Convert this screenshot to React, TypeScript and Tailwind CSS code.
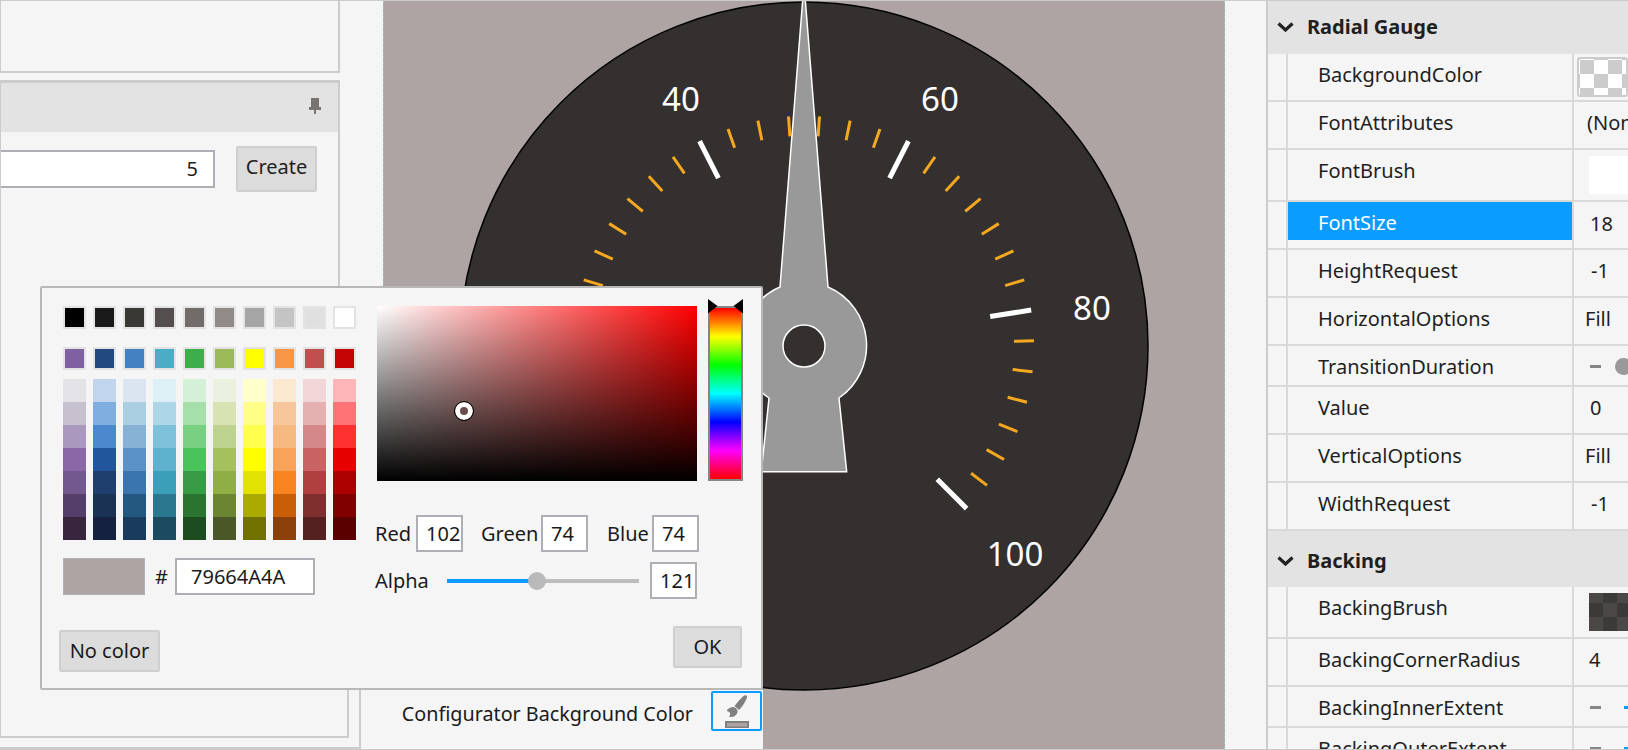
import type { ReactNode } from 'react';

const topSwatches = ['#000000', '#1a1a1a', '#3a3835', '#544f4e', '#716c6a', '#908b88', '#a5a5a5', '#c4c4c4', '#e0e0e0', '#ffffff'];
const accentSwatches = ['#7f60a0', '#234a80', '#4381c0', '#4aacc5', '#3cae4a', '#9bbb59', '#ffff00', '#f79646', '#c0504d', '#c50505'];
const shades = [
  ['#e4e3e8', '#c7c0ce', '#ab98bf', '#8c67a8', '#73578f', '#543f6a', '#38263f'],
  ['#c1d5ee', '#7fafe0', '#4a87cc', '#22569c', '#1f3f6e', '#1a3355', '#15223f'],
  ['#dbe5f1', '#abcfe2', '#87b2d5', '#5a92c8', '#3a75b0', '#245880', '#1a3c5c'],
  ['#dcf0f5', '#add7e8', '#7fc1da', '#5fb2ce', '#3c9fba', '#2c7790', '#1c4a60'],
  ['#d4f0d6', '#a5e0aa', '#78d182', '#4ac35a', '#389c46', '#29752f', '#1c4d20'],
  ['#ebf1de', '#d8e2b3', '#bfd390', '#a4c15d', '#8fae45', '#6b8533', '#4a5726'],
  ['#ffffcc', '#ffff88', '#ffff4d', '#ffff00', '#e2e200', '#aaaa00', '#717100'],
  ['#fbe9cf', '#f7c69a', '#f6ba80', '#f8a25a', '#f88421', '#c85f08', '#8a4008'],
  ['#f2d6d8', '#e4b0b0', '#d58888', '#c96262', '#b04040', '#802f2f', '#552020'],
  ['#ffb6b8', '#ff7276', '#ff3030', '#e60000', '#ad0000', '#800000', '#5a0000'],
];

const CX = 804;
const CY = 346;

function Gauge() {
  const ticks = Array.from({ length: 36 }, (_, i) => {
    const angle = ((-135 + (i * 270) / 35) * Math.PI) / 180;
    const major = i % 7 === 0;
    const inner = major ? 188.5 : 210;
    const outer = 230;
    return {
      i,
      major,
      x1: CX + inner * Math.sin(angle),
      y1: CY - inner * Math.cos(angle),
      x2: CX + outer * Math.sin(angle),
      y2: CY - outer * Math.cos(angle),
    };
  });

  return (
    <svg viewBox="384 1 840 748" className="block h-full w-full">
      <circle cx={CX} cy={CY} r={344} fill="#343030" stroke="#000" strokeWidth="1.5" />
      {ticks.map((t) => (
        <line
          key={t.i}
          x1={t.x1}
          y1={t.y1}
          x2={t.x2}
          y2={t.y2}
          stroke={t.major ? '#fff' : '#f5a81f'}
          strokeWidth={t.major ? 5 : 3}
        />
      ))}
      <g fill="#fff" fontSize="33" textAnchor="middle" fontFamily="'Noto Sans', sans-serif">
        <text x="681" y="111">40</text>
        <text x="940" y="111">60</text>
        <text x="1092" y="320">80</text>
        <text x="1015" y="566">100</text>
      </g>
      <path
        d="M802.7 0 L780 287 A63.7 63.7 0 0 0 769 398 L761.3 471.7 L846.7 471.7 L839 398 A63.7 63.7 0 0 0 828 287 L805.3 0 Z"
        fill="#999999"
        stroke="#fff"
        strokeWidth="1.5"
      />
      <circle cx={CX} cy={CY} r={21} fill="#343030" stroke="#fff" strokeWidth="1.5" />
    </svg>
  );
}

function NumBox({ value, className = '' }: { value: string; className?: string }) {
  return (
    <div className={`flex h-[37px] w-[47px] items-center border-2 border-[#aeaeb4] bg-white pl-[8px] whitespace-nowrap ${className}`}>
      {value}
    </div>
  );
}

function Swatch({ color }: { color: string }) {
  return (
    <div className="h-[23px] w-[23px] border-2 border-[#e3e3e3]" style={{ backgroundColor: color }} />
  );
}

function ColorDialog() {
  return (
    <div className="absolute left-[40px] top-[285px] flex h-[404px] w-[723px] rounded-[2px] border-2 border-[#b8b8b8] bg-[#f5f5f5] text-[20px] text-[#1a1a1a]">
      <div className="w-[335px] pl-[21px] pt-[18px]">
        <div className="flex gap-[7px]">
          {topSwatches.map((c) => (
            <Swatch key={c} color={c} />
          ))}
        </div>
        <div className="mt-[18px] flex gap-[7px]">
          {accentSwatches.map((c) => (
            <Swatch key={c} color={c} />
          ))}
        </div>
        <div className="mt-[9px] flex gap-[7px]">
          {shades.map((col) => (
            <div key={col[0]} className="w-[23px]">
              {col.map((c) => (
                <div key={c} className="h-[23px]" style={{ backgroundColor: c }} />
              ))}
            </div>
          ))}
        </div>
        <div className="mt-[18px] flex h-[37px] items-center">
          <div className="h-full w-[82px] border border-[#b0b0b8] bg-[#aea4a4]" />
          <span className="ml-[10px] w-[20px]">#</span>
          <div className="flex h-full w-[140px] items-center border-2 border-[#aeaeb4] bg-white pl-[14px]">79664A4A</div>
        </div>
        <div className="-ml-[4px] mt-[35px] flex h-[42px] w-[101px] items-center justify-center rounded-[2px] border-2 border-[#cfcfcf] bg-[#dcdcdc]">
          No color
        </div>
      </div>

      <div className="w-[384px] pt-[18px]">
        <div className="flex gap-[11px]">
          <div className="relative h-[175px] w-[320px] bg-[linear-gradient(to_bottom,transparent,#000),linear-gradient(to_right,#fff,#f00)]">
            <div className="absolute left-[78px] top-[96px] h-[18px] w-[18px] rounded-full border-[5px] border-white bg-[#6b4c4c] outline-1 outline-black" />
          </div>
          <div className="relative h-[175px] w-[35px] border-2 border-[#858585] bg-[linear-gradient(to_bottom,#f00,#ff0,#0f0,#0ff,#00f,#f0f,#f00)]">
            <svg viewBox="0 0 35 15" className="absolute -left-[2px] -top-[9px] h-[15px] w-[35px]">
              <path d="M0 0 L9.5 7 L0 14.5 Z M35 0 L25.5 7 L35 14.5 Z" fill="#000" />
            </svg>
          </div>
        </div>
        <div className="-ml-[2px] mt-[34px] flex items-center">
          <span className="w-[41px]">Red</span>
          <NumBox value="102" />
          <span className="ml-[18px] w-[60px]">Green</span>
          <NumBox value="74" />
          <span className="ml-[19px] w-[45px]">Blue</span>
          <NumBox value="74" />
        </div>
        <div className="-ml-[2px] mt-[10px] flex items-center">
          <span className="w-[72px]">Alpha</span>
          <div className="relative flex h-[18px] w-[192px] items-center">
            <div className="h-[4px] w-full bg-[#bdbdbd]" />
            <div className="absolute left-0 top-[7px] h-[4px] w-[90px] bg-[#0a9cff]" />
            <div className="absolute left-[81px] top-0 h-[18px] w-[18px] rounded-full bg-[#b9b9b9]" />
          </div>
          <NumBox value="121" className="ml-[11px]" />
        </div>
        <div className="mt-[27px] flex justify-end pr-[19px]">
          <div className="flex h-[42px] w-[69px] items-center justify-center rounded-[2px] border-2 border-[#cfcfcf] bg-[#dcdcdc]">
            OK
          </div>
        </div>
      </div>
    </div>
  );
}

function PropHeader({ title, className }: { title: string; className: string }) {
  return (
    <div className={`flex items-center bg-[#e3e3e3] pl-[9px] ${className}`}>
      <svg viewBox="0 0 17 10" className="h-[10px] w-[17px]">
        <path d="M1.5 1.5 L8.5 8 L15.5 1.5" fill="none" stroke="#222" strokeWidth="3.2" />
      </svg>
      <span className="ml-[13px] text-[20px] font-bold text-[#1f1f1f]">{title}</span>
    </div>
  );
}

function PropRow({
  name,
  value,
  height,
  active,
  namePad = 'pb-[5px]',
  valuePad = 'pb-[5px]',
}: {
  name: string;
  value?: ReactNode;
  height: string;
  active?: boolean;
  namePad?: string;
  valuePad?: string;
}) {
  return (
    <div className={`flex border-b-2 border-[#d9d9d9] ${height}`}>
      <div className="w-[18px] shrink-0" />
      <div className="flex w-[288px] shrink-0 border-x-2 border-[#d9d9d9]">
        <div
          className={`flex w-full items-center pl-[30px] ${namePad} ${
            active ? 'h-[38px] bg-[#0a9cff] text-white' : 'text-[#1f1f1f]'
          }`}
        >
          {name}
        </div>
      </div>
      <div className={`flex min-w-0 grow items-center whitespace-nowrap text-[#1f1f1f] ${valuePad}`}>{value}</div>
    </div>
  );
}

function Slider({ dot }: { dot: 'thumb' | 'blue' }) {
  return (
    <div className="flex items-center pl-[16px]">
      <div className="h-[3px] w-[11px] bg-[#858585]" />
      {dot === 'thumb' ? (
        <div className="ml-[14px] h-[17px] w-[17px] shrink-0 rounded-full bg-[#999999]" />
      ) : (
        <div className="ml-[23px] h-[3px] w-[4px] bg-[#0a9cff]" />
      )}
    </div>
  );
}

function PropertiesPanel() {
  return (
    <div className="w-[362px] shrink-0 overflow-hidden border-l-2 border-[#cccccc] text-[20px]">
      <PropHeader title="Radial Gauge" className="h-[53px] pb-[2px]" />
      <PropRow
        name="BackgroundColor"
        height="h-[48px]"
        valuePad="pb-[3px]"
        value={
          <div className="ml-[3px] mt-[3px] h-[40px] w-[60px] rounded-[3px] border-2 border-[#cccccc] bg-[conic-gradient(#fff_25%,#ccc_0_50%,#fff_0_75%,#ccc_0)] bg-[length:28px_28px] bg-[position:1px_1px]" />
        }
      />
      <PropRow name="FontAttributes" height="h-[48px]" value={<span className="pl-[13px]">(None)</span>} />
      <PropRow
        name="FontBrush"
        height="h-[52px]"
        namePad="pb-[8px]"
        valuePad="pb-[3px]"
        value={<div className="ml-[15px] mt-[3px] h-[38px] w-[50px] bg-white" />}
      />
      <PropRow
        name="FontSize"
        height="h-[48px]"
        active
        namePad="pt-[3px]"
        valuePad="pb-[3px]"
        value={<span className="pl-[16px]">18</span>}
      />
      <PropRow name="HeightRequest" height="h-[48px]" value={<span className="pl-[17px]">-1</span>} />
      <PropRow name="HorizontalOptions" height="h-[48px]" value={<span className="pl-[11px]">Fill</span>} />
      <PropRow
        name="TransitionDuration"
        height="h-[41px]"
        namePad="pt-[2px]"
        valuePad="pt-[2px]"
        value={<Slider dot="thumb" />}
      />
      <PropRow name="Value" height="h-[48px]" value={<span className="pl-[16px]">0</span>} />
      <PropRow name="VerticalOptions" height="h-[48px]" value={<span className="pl-[11px]">Fill</span>} />
      <PropRow name="WidthRequest" height="h-[48px]" value={<span className="pl-[17px]">-1</span>} />
      <PropHeader title="Backing" className="h-[56px] pt-[3px]" />
      <PropRow
        name="BackingBrush"
        height="h-[52px]"
        namePad="pb-[8px]"
        valuePad="pb-[3px]"
        value={
          <div className="ml-[15px] mt-[3px] h-[38px] w-[50px] bg-[conic-gradient(#3c3a39_25%,#4c4847_0_50%,#3c3a39_0_75%,#4c4847_0)] bg-[length:28px_28px] bg-[position:0px_-4px]" />
        }
      />
      <PropRow name="BackingCornerRadius" height="h-[48px]" value={<span className="pl-[15px]">4</span>} />
      <PropRow
        name="BackingInnerExtent"
        height="h-[41px]"
        namePad="pt-[2px]"
        valuePad="pt-[2px]"
        value={<Slider dot="blue" />}
      />
      <PropRow
        name="BackingOuterExtent"
        height="h-[41px]"
        namePad="pt-[2px]"
        valuePad="pt-[2px]"
        value={<Slider dot="blue" />}
      />
    </div>
  );
}

export default function App() {
  return (
    <div className="relative flex h-[750px] w-[1628px] overflow-hidden border-y border-[#cccccc] bg-[#f5f5f5] font-['Noto_Sans',sans-serif]">
      <div className="flex w-[361px] shrink-0 flex-col text-[20px] text-[#1f1f1f]">
        <div className="h-[72px] w-[340px] shrink-0 border-b-2 border-l border-r-2 border-[#cccccc]" />
        <div className="mt-[7px] h-[400px] w-[340px] shrink-0 border-l border-r-2 border-t-[3px] border-[#cccccc]">
          <div className="flex h-[49px] items-center justify-end bg-[#e3e3e3] pb-[3px] pr-[17px]">
            <svg viewBox="0 0 12 16" className="h-[16px] w-[12px]">
              <path d="M2 0 H10 V9 H12 V12 H7 V16 H5 V12 H0 V9 H2 Z" fill="#787472" />
            </svg>
          </div>
          <div className="flex items-start pt-[14px]">
            <div className="mt-[4px] flex h-[38px] w-[214px] items-center justify-end border-2 border-l-0 border-[#aeaeb4] bg-white pr-[15px]">
              5
            </div>
            <div className="ml-[21px] flex h-[46px] w-[81px] items-center justify-center rounded-[2px] border-2 border-[#cfcfcf] bg-[#dcdcdc] pb-[4px]">
              Create
            </div>
          </div>
        </div>
        <div className="grow border-b-2 border-r-2 border-[#cccccc]">
          <div className="h-[258px] w-[349px] border-b-2 border-l border-r-2 border-[#cccccc]" />
        </div>
      </div>

      <div className="ml-[22px] w-[842px] shrink-0 border-x border-dashed border-[#9dbcbc] bg-[#aea4a4]">
        <Gauge />
      </div>

      <div className="w-[41px] shrink-0" />
      <PropertiesPanel />

      <div className="absolute bottom-0 left-[361px] flex h-[59px] w-[402px] items-center justify-end bg-[#f5f5f5] pr-[1px] text-[19.75px] text-[#1a1a1a]">
        <span className="mb-[12px] mr-[18px] whitespace-nowrap">Configurator Background Color</span>
        <div className="mb-[17px] flex h-[40px] w-[51px] items-center justify-center rounded-[2px] border-2 border-[#0a9cff]">
          <svg viewBox="725 694 24 34" className="h-[34px] w-[24px]">
            <path d="M743.5 696 C745 694.5 747.5 695 747 697.5 C746 701 742 707 739 710 L734.5 706 C737 703 740.5 698.5 743.5 696 Z" fill="#808080" />
            <path d="M733 707 C736 707 738 710 737.5 712.5 C736.5 716 732 718 729 716.5 C731 715 730.5 712 727 711 C726 710.5 729 707.5 733 707 Z" fill="#808080" />
            <rect x="726" y="722" width="22" height="5.500" fill="#aea4a4" stroke="#808080" strokeWidth="2" />
          </svg>
        </div>
      </div>

      <ColorDialog />
    </div>
  );
}
